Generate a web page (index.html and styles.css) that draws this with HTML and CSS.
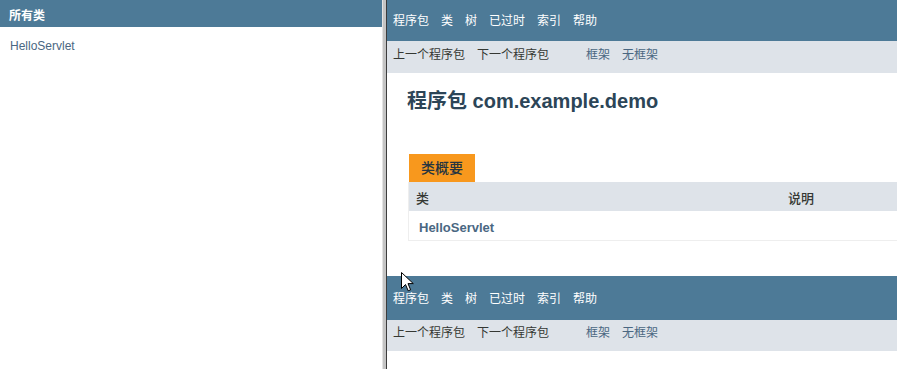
FILE: index.html
```html
<!DOCTYPE html>
<html lang="zh-CN">
<head>
<meta charset="utf-8">
<title>com.example.demo</title>
<link rel="stylesheet" href="styles.css">
</head>
<body>
<div class="frames">
  <div class="left">
    <h1 class="bar">所有类</h1>
    <div class="indexContainer">
      <ul>
        <li><a href="#">HelloServlet</a></li>
      </ul>
    </div>
  </div>
  <div class="divider"></div>
  <div class="right">
    <div class="topNav">
      <ul class="navList">
        <li>程序包</li>
        <li>类</li>
        <li>树</li>
        <li>已过时</li>
        <li>索引</li>
        <li>帮助</li>
      </ul>
    </div>
    <div class="subNav">
      <ul class="navList first">
        <li>上一个程序包</li>
        <li>下一个程序包</li>
      </ul>
      <ul class="navList">
        <li><a href="#">框架</a></li>
        <li><a href="#">无框架</a></li>
      </ul>
    </div>
    <div class="header">
      <h1 class="title">程序包 com.example.demo</h1>
    </div>
    <div class="contentContainer">
      <div class="tab">类概要</div>
      <table class="summary">
        <colgroup><col class="c1"><col class="c2"></colgroup>
        <thead>
          <tr><th>类</th><th>说明</th></tr>
        </thead>
        <tbody>
          <tr><td><a href="#">HelloServlet</a></td><td></td></tr>
        </tbody>
      </table>
    </div>
    <div class="bottomNav">
      <ul class="navList">
        <li>程序包</li>
        <li>类</li>
        <li>树</li>
        <li>已过时</li>
        <li>索引</li>
        <li>帮助</li>
      </ul>
    </div>
    <div class="subNav bottom">
      <ul class="navList first">
        <li>上一个程序包</li>
        <li>下一个程序包</li>
      </ul>
      <ul class="navList">
        <li><a href="#">框架</a></li>
        <li><a href="#">无框架</a></li>
      </ul>
    </div>
    <svg class="cursor" width="13" height="20" viewBox="0 0 13 20" aria-hidden="true">
      <path d="M0.5 0.5 L0.5 16.5 L4.5 12.5 L7.2 18.8 L9.6 17.8 L7 11.6 L12.3 11.6 Z" fill="#ffffff" stroke="#000000" stroke-width="1" stroke-linejoin="miter"/>
    </svg>
  </div>
</div>
</body>
</html>
```

FILE: styles.css
```css
html, body {
  margin: 0;
  padding: 0;
  height: 369px;
  overflow: hidden;
  background: #ffffff;
}

body {
  color: #353833;
  font-family: "Liberation Sans", Arial, "Noto Sans CJK SC", sans-serif;
  font-size: 14px;
}

a {
  color: #4a6782;
  text-decoration: none;
}

ul {
  margin: 0;
  padding: 0;
  list-style: none;
}

.frames {
  display: flex;
  height: 369px;
}

.left {
  width: 382px;
  flex: none;
  background: #ffffff;
  overflow: hidden;
}

.bar {
  margin: 0;
  height: 27px;
  box-sizing: border-box;
  padding: 8px 6px 3px 9px;
  background: #4d7a97;
  color: #ffffff;
  font-size: 12px;
  line-height: 16px;
  font-weight: bold;
}

.indexContainer {
  margin: 11px 10px 10px 10px;
  font-size: 12px;
  line-height: 16px;
}

.divider {
  flex: none;
  width: 5px;
  box-sizing: border-box;
  background: #c4c4c4;
  border-left: 1px solid #e3e3e3;
  border-right: 1px solid #3c3c3c;
}

.right {
  flex: 1;
  min-width: 0;
  overflow: hidden;
  position: relative;
}

.topNav, .bottomNav {
  background: #4d7a97;
  color: #ffffff;
  font-size: 12px;
  box-sizing: border-box;
}

.topNav {
  height: 41px;
  padding-top: 8px;
}

.bottomNav {
  height: 44px;
  padding-top: 10px;
  margin-top: 35px;
}

.navList {
  display: flex;
}

.navList li {
  padding: 5px 6px;
  line-height: 16px;
  white-space: nowrap;
}

.subNav {
  display: flex;
  background: #dee3e9;
  font-size: 12px;
  height: 32px;
  box-sizing: border-box;
  padding-top: 1px;
}

.subNav.bottom {
  height: 31px;
  padding-top: 0;
}

.subNav .first {
  margin-right: 25px;
}

.header {
  margin: 0 20px;
  padding-top: 5px;
}

.title {
  margin: 11px 0 10px 0;
  color: #2c4557;
  font-size: 20px;
  line-height: 24px;
  font-weight: bold;
  white-space: nowrap;
}

.contentContainer {
  padding: 31px 0 0 21px;
}

.tab {
  display: inline-block;
  margin-left: 1px;
  height: 28px;
  line-height: 28px;
  padding: 0 12px;
  background: #f8981d;
  color: #253441;
  font-size: 14px;
  font-weight: 500;
  vertical-align: top;
}

.summary {
  width: 800px;
  table-layout: fixed;
  border-collapse: separate;
  border-spacing: 0;
  border-left: 1px solid #eeeeee;
  border-right: 1px solid #eeeeee;
  border-bottom: 1px solid #eeeeee;
  font-size: 13px;
}

.summary .c1 {
  width: 372px;
}

.summary th {
  background: #dee3e9;
  text-align: left;
  font-weight: 500;
  padding: 8px 3px 3px 7px;
  line-height: 18px;
  color: #353833;
}

.summary td {
  padding: 8px 3px 3px 10px;
  line-height: 18px;
  background: #ffffff;
}

.summary td a {
  font-weight: bold;
}

.cursor {
  position: absolute;
  left: 14px;
  top: 272px;
}
```
